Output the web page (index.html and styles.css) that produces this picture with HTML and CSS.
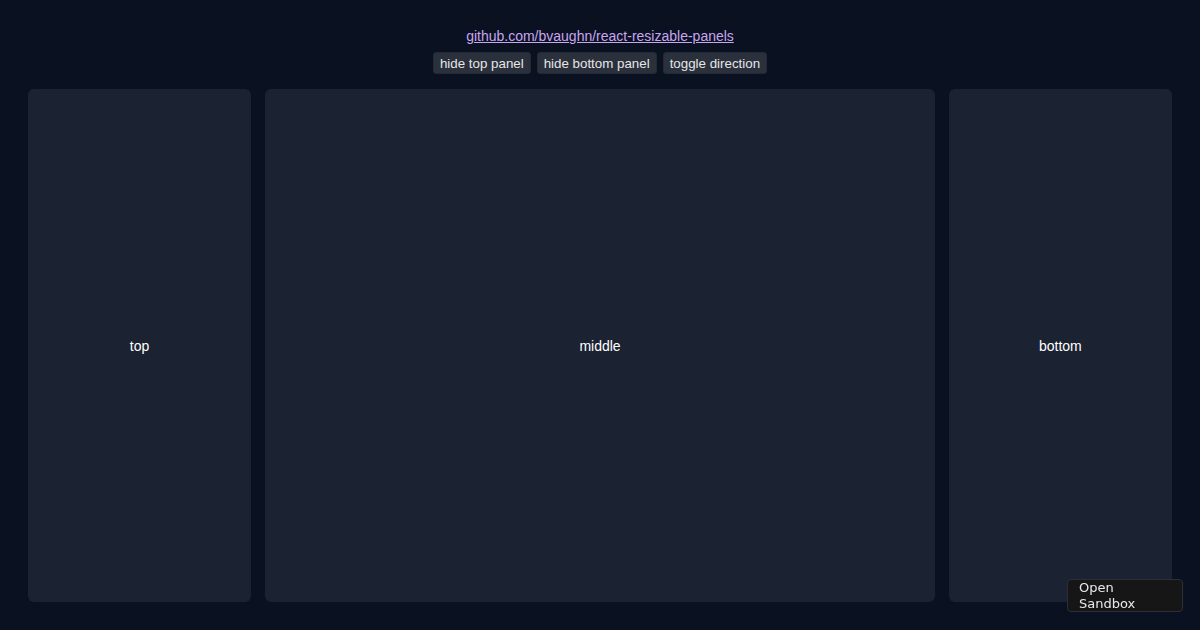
FILE: index.html
```html
<!DOCTYPE html>
<html>
<head>
<meta charset="utf-8">
<link rel="stylesheet" href="styles.css">
</head>
<body>
<div class="app">
  <div class="header">
    <a class="link" href="#">github.com/bvaughn/react-resizable-panels</a>
    <div class="toolbar">
      <button class="btn">hide top panel</button>
      <button class="btn">hide bottom panel</button>
      <button class="btn">toggle direction</button>
    </div>
  </div>
  <div class="group">
    <div class="panel side">top</div>
    <div class="handle"></div>
    <div class="panel main">middle</div>
    <div class="handle"></div>
    <div class="panel side">bottom</div>
  </div>
</div>
<div class="sandbox">Open Sandbox</div>
</body>
</html>
```
FILE: styles.css
```css
html, body {
  margin: 0;
  height: 100%;
  background: #0a1120;
  font-family: "Liberation Sans", Arial, sans-serif;
  color: #fff;
}
.app {
  height: 630px;
  box-sizing: border-box;
  padding: 28px 28px 28px;
  display: flex;
  flex-direction: column;
}
.header {
  display: flex;
  flex-direction: column;
  align-items: center;
  gap: 8px;
  margin-bottom: 15px;
}
.link {
  color: #c9a6f0;
  font-size: 14px;
  line-height: 16px;
  text-decoration: underline;
}
.toolbar {
  display: flex;
  gap: 6px;
}
.btn {
  height: 22px;
  padding: 1px 6px 0;
  font-family: "Liberation Sans", Arial, sans-serif;
  font-size: 13.333px;
  color: #e6e6e6;
  background: #2a303c;
  border: 1px solid #222834;
  border-radius: 3px;
  line-height: 19px;
}
.group {
  flex: 1;
  display: flex;
}
.handle {
  width: 14px;
  flex: none;
}
.panel {
  background: #1b2232;
  border-radius: 6px;
  display: flex;
  align-items: center;
  justify-content: center;
  font-size: 14px;
  color: #fff;
}
.side {
  flex: 20 1 0;
}
.main {
  flex: 60 1 0;
}
.sandbox {
  position: fixed;
  left: 1067px;
  top: 579px;
  width: 91px;
  height: 30px;
  padding: 1px 12px 0 11px;
  background: #161616;
  border: 1px solid #2c2f36;
  border-radius: 4px;
  font-family: "DejaVu Sans", sans-serif;
  font-size: 13px;
  line-height: 16px;
  color: #e8e8e8;
  display: flex;
  align-items: center;
}
```
